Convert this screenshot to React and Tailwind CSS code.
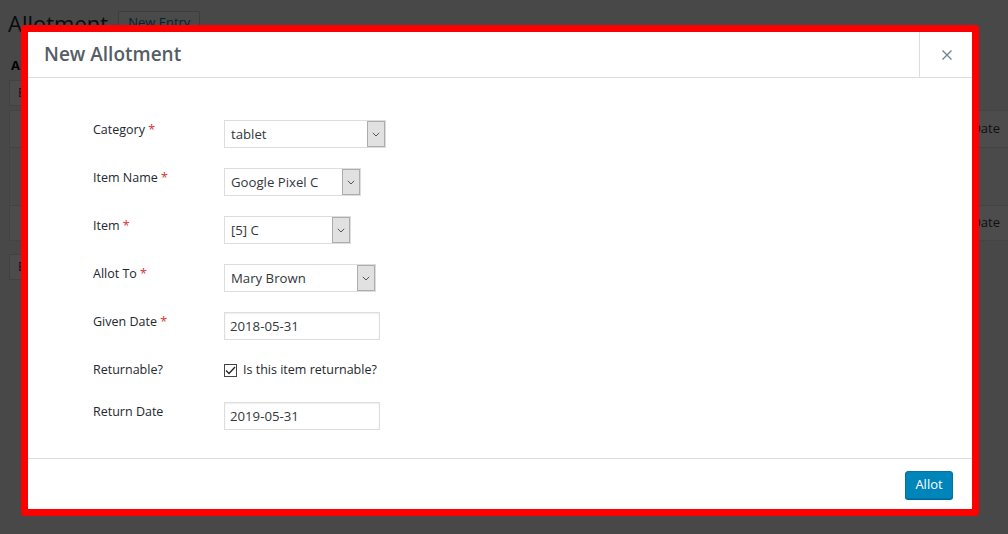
import React from "react";

const font = { fontFamily: '"Open Sans", "Noto Sans", Arial, sans-serif' };

function Chevron() {
  return (
    <svg width="8" height="5" viewBox="0 0 8 5" fill="none">
      <path d="M0.8 0.8 L4 4 L7.2 0.8" stroke="#555" strokeWidth="1" />
    </svg>
  );
}

function Select({ value, width }) {
  return (
    <div className="flex h-[28px] border border-[#dddddd] bg-white" style={{ width }}>
      <div className="flex-1 flex items-center pl-[6px] pt-[2px] text-[13.2px] text-[#32373c] leading-none">{value}</div>
      <div className="w-[18px] bg-[#e1e1e1] border border-[#acacac] flex items-center justify-center">
        <Chevron />
      </div>
    </div>
  );
}

function TextInput({ value }) {
  return (
    <div className="flex items-center h-[28px] w-[156px] border border-[#dddddd] bg-white pl-[5px] pt-[2px] text-[13.2px] leading-none text-[#32373c] shadow-[inset_0_1px_2px_rgba(0,0,0,0.07)]">
      {value}
    </div>
  );
}

function Label({ children, required }) {
  return (
    <div className="w-[131px] shrink-0 pt-[1px] text-[12.5px] leading-[18px] text-[#23282d]">
      {children}
      {required && <span className="text-[#dc3232]"> *</span>}
    </div>
  );
}

export default function App() {
  return (
    <div className="relative w-[1008px] h-[534px] overflow-hidden bg-[#f1f1f1]" style={font}>
      {/* background admin page */}
      <div className="pl-[8px] pt-[9px]">
        <div className="flex items-center gap-[10px]">
          <h1 className="text-[22px] leading-[28px] text-[#23282d]">Allotment</h1>
          <div className="h-[24px] px-[9px] flex items-center border border-[#cccccc] bg-[#f7f7f7] rounded-[2px] text-[13px] text-[#0073aa]">
            New Entry
          </div>
        </div>
        <div className="mt-[19px] pl-[3px] text-[13px] leading-[18px] font-bold text-[#000]">All (1)</div>
        <div className="mt-[6px] ml-[1px] w-[120px] h-[26px] border border-[#dddddd] bg-white flex items-center pl-[8px] text-[13px] text-[#32373c]">
          Bulk Actions
        </div>
        <div className="mt-[4px] ml-[1px] w-[1010px] border border-[#e5e5e5] bg-white text-[13px] text-[#32373c]">
          <div className="h-[37px] border-b border-[#e1e1e1] flex items-center justify-end pr-[18px]">Return Date</div>
          <div className="h-[58px] border-b border-[#e1e1e1] bg-[#f9f9f9]"></div>
          <div className="h-[34px] flex items-center justify-end pr-[18px]">Return Date</div>
        </div>
        <div className="mt-[13px] ml-[1px] w-[120px] h-[26px] border border-[#dddddd] bg-white flex items-center pl-[8px] text-[13px] text-[#32373c]">
          Bulk Actions
        </div>
      </div>

      {/* overlay */}
      <div className="absolute inset-0 bg-black/70"></div>

      {/* modal */}
      <div className="absolute left-[21px] top-[25px] w-[958px] h-[491px] border-[7px] border-[#ff0000] rounded-[4px] bg-white flex flex-col">
        <div className="h-[46px] shrink-0 border-b border-[#dddddd] flex">
          <div className="flex-1 flex items-center pl-[16px] text-[19px] font-semibold text-[#555d66]">New Allotment</div>
          <div className="w-[53px] border-l border-[#dddddd] flex items-center justify-center pl-[1px]">
            <svg width="10" height="10" viewBox="0 0 10 10">
              <path d="M0.5 0.5 L9.5 9.5 M9.5 0.5 L0.5 9.5" stroke="#6f7f90" strokeWidth="1.3" />
            </svg>
          </div>
        </div>

        <div className="flex-1 pl-[65px] pt-[42px] flex flex-col">
          <div className="flex items-start">
            <Label required>Category</Label>
            <Select value="tablet" width={162} />
          </div>
          <div className="flex items-start mt-[20px]">
            <Label required>Item Name</Label>
            <Select value="Google Pixel C" width={137} />
          </div>
          <div className="flex items-start mt-[20px]">
            <Label required>Item</Label>
            <Select value="[5] C" width={127} />
          </div>
          <div className="flex items-start mt-[20px]">
            <Label required>Allot To</Label>
            <Select value="Mary Brown" width={152} />
          </div>
          <div className="flex items-start mt-[20px]">
            <Label required>Given Date</Label>
            <TextInput value="2018-05-31" />
          </div>
          <div className="flex items-center mt-[20px] h-[20px]">
            <div className="w-[131px] shrink-0 text-[12.5px] leading-[18px] text-[#23282d]">Returnable?</div>
            <div className="flex items-center gap-[6px]">
              <div className="w-[13px] h-[13px] border border-[#444] bg-white flex items-center justify-center">
                <svg width="11" height="9" viewBox="0 0 11 9" fill="none">
                  <path d="M1 4.5 L4 7.5 L10 1" stroke="#222" strokeWidth="1.3" />
                </svg>
              </div>
              <span className="text-[12.5px] text-[#23282d]">Is this item returnable?</span>
            </div>
          </div>
          <div className="flex items-start mt-[22px]">
            <Label>Return Date</Label>
            <TextInput value="2019-05-31" />
          </div>
        </div>

        <div className="h-[51px] shrink-0 border-t border-[#dddddd] flex justify-end items-start pt-[12px] pr-[19px]">
          <div className="w-[48px] h-[28px] rounded-[3px] bg-[#0085ba] border border-[#0073aa] shadow-[0_1px_0_#006799] flex items-center justify-center text-[13px] text-white">
            Allot
          </div>
        </div>
      </div>
    </div>
  );
}
